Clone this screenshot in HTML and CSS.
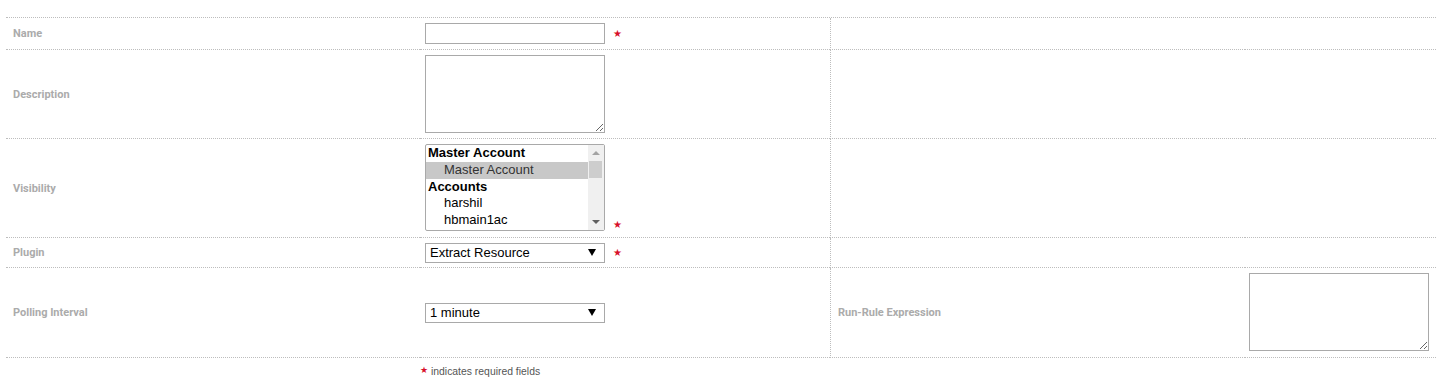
FILE: index.html
```html
<!DOCTYPE html>
<html lang="en">
<head>
    <meta charset="UTF-8">
    <title>Monitor Settings</title>
    <link rel="stylesheet" href="styles.css">
</head>
<body>
    <form class="settings-form">
        <div class="form-grid">
            <div class="cell label">Name</div>
            <div class="cell field">
                <input type="text" class="text-input">
                <span class="req">&#9733;</span>
            </div>
            <div class="cell label divider"></div>
            <div class="cell field"></div>

            <div class="cell label">Description</div>
            <div class="cell field">
                <textarea class="text-area"></textarea>
            </div>
            <div class="cell label divider"></div>
            <div class="cell field"></div>

            <div class="cell label">Visibility</div>
            <div class="cell field field-bottom">
                <span class="list-wrap">
                    <select class="list-box" multiple size="5">
                        <optgroup label="Master Account">
                            <option selected>Master Account</option>
                        </optgroup>
                        <optgroup label="Accounts">
                            <option>harshil</option>
                            <option>hbmain1ac</option>
                            <option>hbsub1ac</option>
                            <option>hbsub2ac</option>
                            <option>mkdemo</option>
                            <option>opsteam</option>
                            <option>qaaccount</option>
                            <option>stage01</option>
                            <option>testacct</option>
                            <option>westregion</option>
                        </optgroup>
                    </select>
                    <span class="scrollbar">
                        <span class="sb-btn"><span class="arrow-up"></span></span>
                        <span class="sb-thumb"></span>
                        <span class="sb-track"></span>
                        <span class="sb-btn"><span class="arrow-down"></span></span>
                    </span>
                </span>
                <span class="req req-low">&#9733;</span>
            </div>
            <div class="cell label divider"></div>
            <div class="cell field"></div>

            <div class="cell label">Plugin</div>
            <div class="cell field">
                <span class="select-wrap">
                    <select class="drop">
                        <option>Extract Resource</option>
                        <option>Ping Check</option>
                        <option>HTTP Check</option>
                    </select>
                </span>
                <span class="req">&#9733;</span>
            </div>
            <div class="cell label divider"></div>
            <div class="cell field"></div>

            <div class="cell label">Polling Interval</div>
            <div class="cell field">
                <span class="select-wrap">
                    <select class="drop">
                        <option>1 minute</option>
                        <option>5 minutes</option>
                        <option>15 minutes</option>
                    </select>
                </span>
            </div>
            <div class="cell label divider">Run-Rule Expression</div>
            <div class="cell field field-right">
                <textarea class="text-area"></textarea>
            </div>
        </div>
        <p class="legend"><span class="req-small">&#9733;</span> indicates required fields</p>
    </form>
</body>
</html>
```

FILE: styles.css
```css
body {
    margin: 0;
    padding: 17px 2px 0 6px;
    background: #fff;
    font-family: "Liberation Sans", Arial, sans-serif;
    color: #000;
}
.form-grid {
    display: grid;
    grid-template-columns: 414px 410px 415px 191px;
    grid-template-rows: 32px 89px 99px 30px 90px;
    border-top: 1px dotted #bdbdbd;
}
.cell {
    box-sizing: border-box;
    display: flex;
    align-items: center;
    border-bottom: 1px dotted #bdbdbd;
}
.label {
    padding-left: 7px;
    font-family: Roboto, "Liberation Sans", sans-serif;
    font-size: 11px;
    font-weight: bold;
    color: #ababab;
}
.divider {
    border-left: 1px dotted #bdbdbd;
}
.field {
    padding-left: 5px;
}
.field-bottom {
    align-items: flex-end;
    padding-bottom: 5px;
}
.field-right {
    padding-left: 4px;
    padding-bottom: 2px;
}
.text-input {
    box-sizing: border-box;
    width: 180px;
    height: 21px;
    margin: 0;
    border: 1px solid #a9a9a9;
    padding: 1px 3px;
    font-size: 13px;
}
.text-area {
    box-sizing: border-box;
    width: 180px;
    height: 78px;
    margin: 0;
    border: 1px solid #a9a9a9;
    font-size: 13px;
}

/* visibility list box with a drawn scrollbar */
.list-wrap {
    position: relative;
    display: inline-block;
    height: 87px;
    margin-bottom: 1px;
}
.list-box {
    box-sizing: border-box;
    display: block;
    width: 180px;
    height: 87px;
    margin: 0;
    border: 1px solid #a9a9a9;
    padding: 0;
    overflow: hidden;
    font-family: "Liberation Sans", Arial, sans-serif;
    font-size: 13px;
    color: #000;
    outline: none;
}
.list-box optgroup {
    font-weight: bold;
    padding-left: 0;
}
.list-box option {
    font-weight: normal;
    height: 17px;
    line-height: 17px;
    padding: 0 0 0 18px;
}
.list-box option:checked {
    background: #c8c8c8 linear-gradient(#c8c8c8, #c8c8c8);
    color: #333;
}
.scrollbar {
    position: absolute;
    top: 1px;
    right: 1px;
    bottom: 1px;
    width: 16px;
    display: flex;
    flex-direction: column;
    background: #f0f0f0;
}
.sb-btn {
    height: 16px;
    display: flex;
    align-items: center;
    justify-content: center;
}
.sb-thumb {
    height: 17px;
    margin: 0 2px 0 1px;
    background: #cdcdcd;
}
.sb-track {
    flex: 1;
}
.arrow-up {
    width: 0;
    height: 0;
    border-left: 4px solid transparent;
    border-right: 4px solid transparent;
    border-bottom: 4px solid #a3a3a3;
}
.arrow-down {
    width: 0;
    height: 0;
    border-left: 4px solid transparent;
    border-right: 4px solid transparent;
    border-top: 4px solid #606060;
}

.select-wrap {
    position: relative;
    display: inline-block;
}
.select-wrap::after {
    content: "";
    position: absolute;
    right: 9px;
    top: 6px;
    width: 0;
    height: 0;
    border-left: 4px solid transparent;
    border-right: 4px solid transparent;
    border-top: 7px solid #000;
    pointer-events: none;
}
.drop {
    -webkit-appearance: none;
    appearance: none;
    box-sizing: border-box;
    display: block;
    width: 180px;
    height: 20px;
    margin: 0;
    border: 1px solid #a9a9a9;
    border-radius: 0;
    padding: 0 16px 0 4px;
    background: #fff;
    font-family: "Liberation Sans", Arial, sans-serif;
    font-size: 13px;
    color: #000;
}
.req {
    margin-left: 8px;
    color: #d8102b;
    font-size: 10px;
    line-height: 1;
    font-family: "DejaVu Sans", sans-serif;
}
.req-low {
    margin-bottom: 2px;
}
.legend {
    margin: 8px 0 0 414px;
    font-size: 10.4px;
    color: #555;
}
.req-small {
    position: relative;
    top: -2px;
    color: #d8102b;
    font-size: 9px;
    font-family: "DejaVu Sans", sans-serif;
}
```
